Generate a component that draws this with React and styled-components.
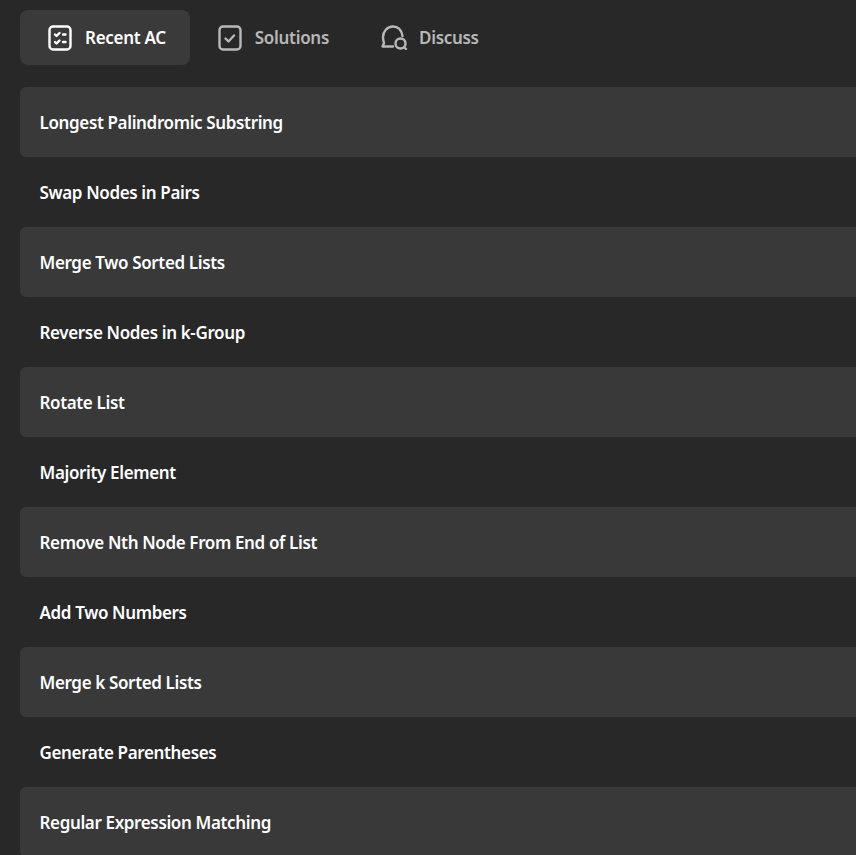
import React from 'react';
import styled, { createGlobalStyle } from 'styled-components';

// Styles
const GlobalStyle = createGlobalStyle`
	html, body {
		margin: 0;
		height: 100%;
		overflow: hidden;
		background: #282828;
	}
`

const Wrapper = styled.div`
	height: 855px;
	overflow: hidden;
	padding-left: 20px;
	background: #282828;
	font-family: "Noto Sans", "Open Sans", sans-serif;
`

const TabBar = styled.div`
	display: flex;
	padding-top: 10px;
	height: 55px;
	margin-bottom: 22px;
`

const Tab = styled.div`
	display: flex;
	align-items: center;
	gap: 13px;
	height: 55px;
	padding: 0 24px 0 28px;
	border-radius: 8px;
	font-size: 17px;
	font-weight: 600;
	letter-spacing: -0.3px;
	color: ${(props) => (props.$active ? '#ffffff' : '#b8b8b8')};
	background: ${(props) => (props.$active ? '#3a3a3a' : 'transparent')};
`

const Row = styled.div`
	display: flex;
	align-items: center;
	height: 70px;
	padding-left: 19.5px;
	border-radius: 6px 0 0 6px;
	font-size: 17px;
	font-weight: 600;
	letter-spacing: -0.36px;
	color: #ffffff;
	background: ${(props) => (props.$shaded ? '#393939' : 'transparent')};
`

const Icon = styled.svg`
	flex: none;
	fill: none;
	stroke: currentColor;
	stroke-width: 2.4;
	stroke-linecap: round;
	stroke-linejoin: round;
`

// Icons
const RecentIcon = () => (
	<Icon width="24" height="26" viewBox="0 0 24 26">
		<rect x="1.5" y="1.5" width="21" height="23" rx="3.5" />
		<path d="M7 9.500l1.500 1.500 3-3M15 9.500h2.500M7 17l1.500 1.500 3-3M15 17h2.500" />
	</Icon>
)

const SolutionIcon = () => (
	<Icon width="24" height="26" viewBox="0 0 24 26">
		<rect x="1.5" y="1.5" width="21" height="23" rx="3.5" />
		<path d="M7.500 13.500l3 3 5.500-6" />
	</Icon>
)

const DiscussIcon = () => (
	<Icon width="25" height="26" viewBox="0 0 25 26" overflow="visible">
		<path d="M21.500 11C20.500 5 17 1.500 12 1.500 6 1.500 2 6.500 2 12c0 2.500.500 4.500 1 6l-1.500 3.500H12" />
		<circle cx="19.500" cy="18.500" r="5" />
		<path d="M23.500 22.500l1.500 1.500" />
	</Icon>
)

const problems = [
	'Longest Palindromic Substring',
	'Swap Nodes in Pairs',
	'Merge Two Sorted Lists',
	'Reverse Nodes in k-Group',
	'Rotate List',
	'Majority Element',
	'Remove Nth Node From End of List',
	'Add Two Numbers',
	'Merge k Sorted Lists',
	'Generate Parentheses',
	'Regular Expression Matching',
]

// Components
const App = () => (
	<Wrapper>
		<GlobalStyle />
		<TabBar>
			<Tab $active><RecentIcon />Recent AC</Tab>
			<Tab><SolutionIcon />Solutions</Tab>
			<Tab><DiscussIcon />Discuss</Tab>
		</TabBar>
		{problems.map((title, i) => (
			<Row key={title} $shaded={i % 2 === 0}>{title}</Row>
		))}
	</Wrapper>
)

export default App
